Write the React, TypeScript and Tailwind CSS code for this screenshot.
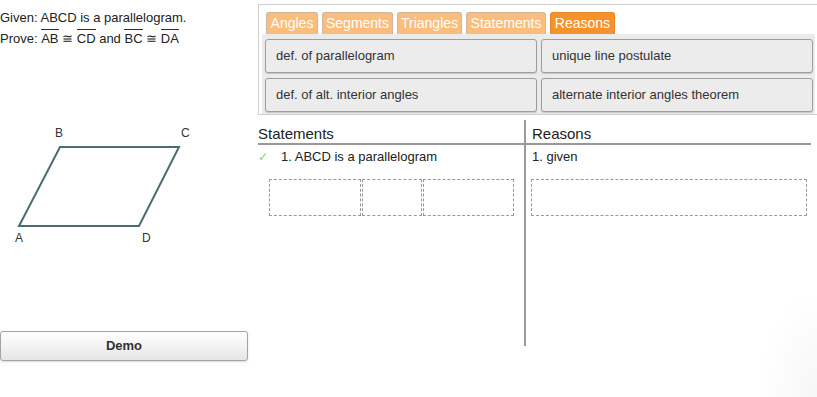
import React from "react";

const tabs = [
  { label: "Angles", w: "w-[52px]", active: false },
  { label: "Segments", w: "w-[71px]", active: false },
  { label: "Triangles", w: "w-[65px]", active: false },
  { label: "Statements", w: "w-[80px]", active: false },
  { label: "Reasons", w: "w-[65px]", active: true },
];

const buttons = [
  "def. of parallelogram",
  "unique line postulate",
  "def. of alt. interior angles",
  "alternate interior angles theorem",
];

function Over({ children }: { children: React.ReactNode }) {
  return (
    <span className="inline-block border-t border-[#333] pt-[2px] leading-[14px]">{children}</span>
  );
}

export default function App() {
  return (
    <div
      className="relative flex h-[397px] w-[817px] overflow-hidden bg-white text-[#222]"
      style={{ fontFamily: '"Liberation Sans", Arial, sans-serif' }}
    >
      {/* Left column */}
      <div className="flex w-[250px] shrink-0 flex-col">
        <div className="pt-[7px] text-[13px] leading-[21px]">
          <div>Given: ABCD is a parallelogram.</div>
          <div>
            Prove: <Over>AB</Over> ≅ <Over>CD</Over> and <Over>BC</Over> ≅ <Over>DA</Over>
          </div>
        </div>
        <svg width="250" height="130" className="mt-[71px] block" viewBox="0 0 250 130">
          <polygon
            points="60,27 179,27 139,106 19,106"
            fill="none"
            stroke="#4d6b73"
            strokeWidth="2"
            strokeLinejoin="miter"
          />
          <g fontSize="12" fill="#333" fontFamily='"Liberation Sans", Arial, sans-serif'>
            <text x="55" y="17">B</text>
            <text x="181" y="17">C</text>
            <text x="15" y="122">A</text>
            <text x="142" y="122">D</text>
          </g>
        </svg>
        <button className="mt-[81px] flex h-[30px] w-[248px] items-center justify-center rounded-[3px] border border-[#a3a3a3] bg-gradient-to-b from-white to-[#e6e6e6] text-[13px] font-bold text-[#333] shadow-[0_1px_2px_rgba(0,0,0,0.15)]">
          Demo
        </button>
      </div>

      {/* Right column */}
      <div className="ml-[8px] flex flex-1 flex-col">
        <div className="mt-[4px] border border-r-0 border-[#cfcfcf] pl-[3px] pr-[2px] pt-[7px]">
          <div className="ml-[4px] flex gap-[4px]">
            {tabs.map((t) => (
              <div
                key={t.label}
                className={`${t.w} flex h-[22px] items-center justify-center rounded-t-[3px] border border-b-0 text-[14px] text-white ${
                  t.active ? "border-[#e08a30] bg-[#f7922a]" : "border-[#c9b9a6] bg-[#fcbd7c]"
                }`}
              >
                {t.label}
              </div>
            ))}
          </div>
          <div className="grid grid-cols-2 gap-x-[4px] gap-y-[5px] bg-[#ebebeb] pb-[2px] pl-[3px] pr-[2px] pt-[5px]">
            {buttons.map((b) => (
              <div
                key={b}
                className="flex h-[34px] items-center rounded-[3px] border border-[#9d9d9d] bg-[#ececec] pl-[10px] text-[13px] text-[#333] shadow-[0_1px_1px_rgba(0,0,0,0.15)]"
              >
                {b}
              </div>
            ))}
          </div>
        </div>

        {/* Proof table */}
        <div className="mt-[5px] flex h-[226px]">
          <div className="w-[266px]">
            <div className="h-[25px] border-b-2 border-[#999] pt-[5px] text-[15px] leading-[18px]">Statements</div>
            <div className="flex h-[22px] items-center pt-[1px] text-[13px]">
              <span className="w-[23px] text-[12px] text-[#9ccc65]">✓</span>
              <span>1. ABCD is a parallelogram</span>
            </div>
            <div className="ml-[11px] mt-[12px] flex gap-[1px]">
              <div className="h-[37px] w-[92px] border border-dashed border-[#999]" />
              <div className="h-[37px] w-[60px] border border-dashed border-[#999]" />
              <div className="h-[37px] w-[91px] border border-dashed border-[#999]" />
            </div>
          </div>
          <div className="w-[2px] bg-[#999]" />
          <div className="w-[285px]">
            <div className="h-[25px] border-b-2 border-[#999] pl-[6px] pt-[5px] text-[15px] leading-[18px]">Reasons</div>
            <div className="flex h-[22px] items-center pl-[6px] pt-[1px] text-[13px]">1. given</div>
            <div className="ml-[5px] mt-[12px] h-[37px] w-[276px] border border-dashed border-[#999]" />
          </div>
        </div>
      </div>

      <div className="pointer-events-none absolute bottom-0 right-0 h-[110px] w-[60px] bg-[radial-gradient(ellipse_at_bottom_right,rgba(0,0,0,0.035),transparent_70%)]" />
    </div>
  );
}
